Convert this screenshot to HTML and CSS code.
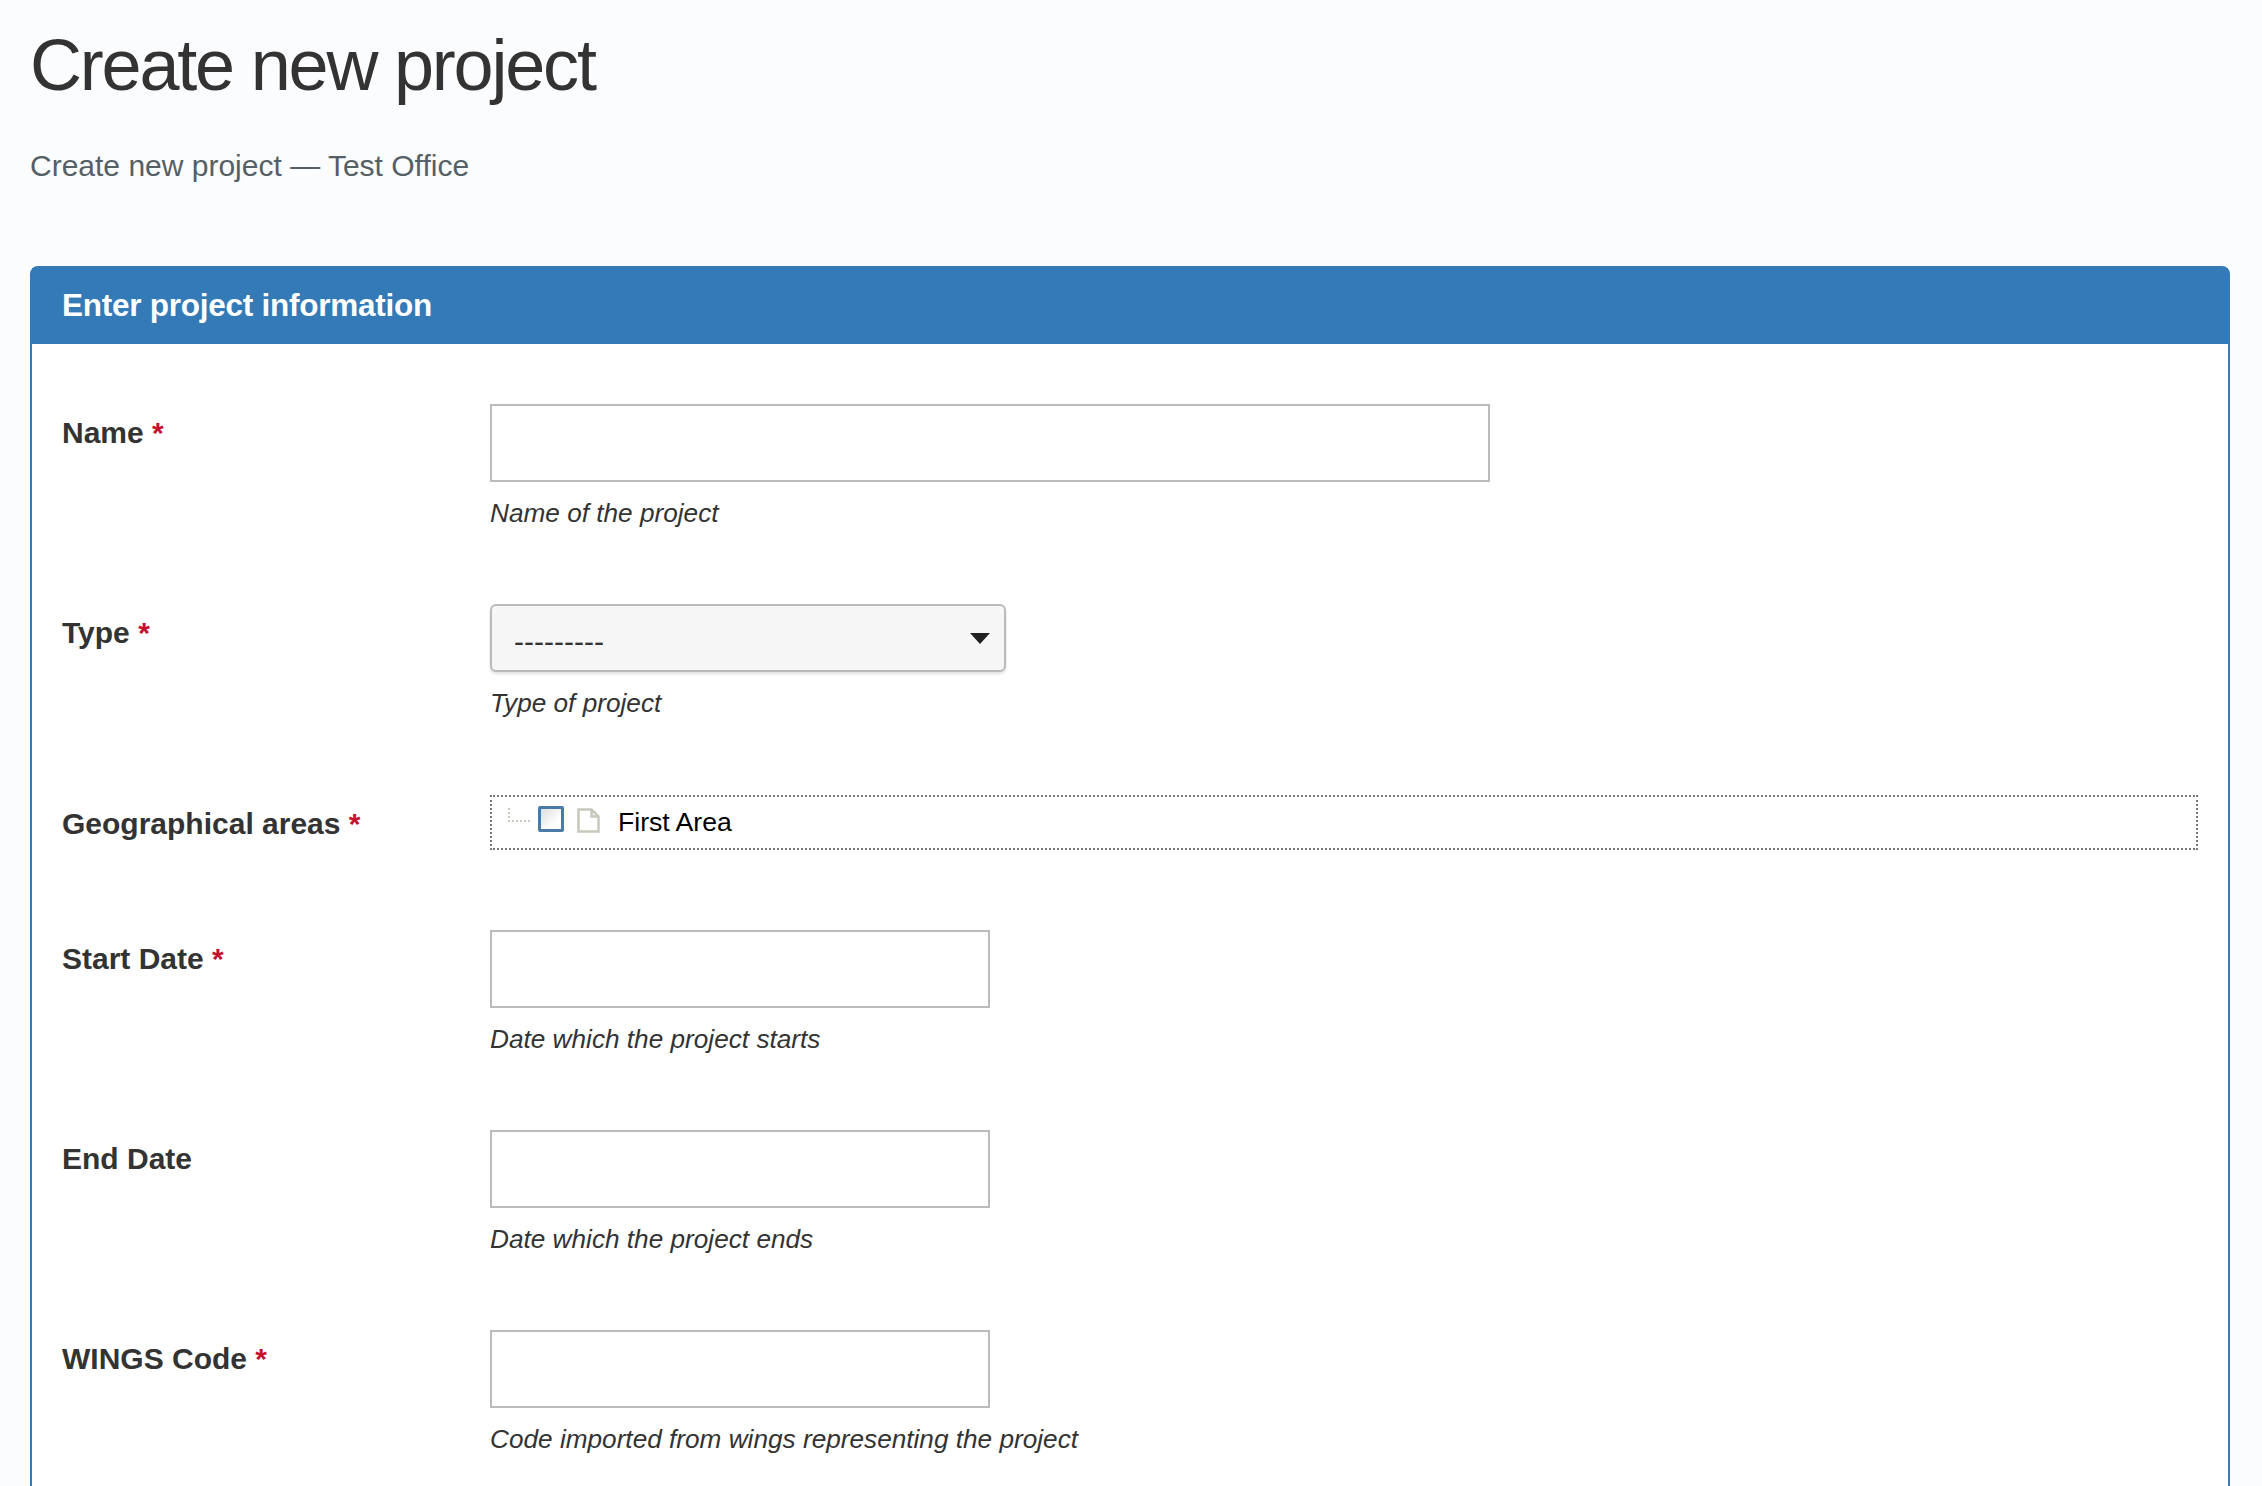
FILE: index.html

```html
<!DOCTYPE html>
<html lang="en">
<head>
  <meta charset="UTF-8" />
  <title>Create new project</title>
  <link rel="stylesheet" href="styles.css">
</head>
<body>
  <h1>Create new project</h1>
  <p class="subtitle">Create new project — Test Office</p>

  <form class="panel">
    <div class="panel-heading">Enter project information</div>
    <div class="panel-body">

      <div class="row">
        <label class="field-label">Name <span class="req">*</span></label>
        <div class="field">
          <input type="text" class="input-name">
          <p class="help">Name of the project</p>
        </div>
      </div>

      <div class="row row-type">
        <label class="field-label">Type <span class="req">*</span></label>
        <div class="field">
          <div class="select-wrap">
            <select><option>---------</option></select>
          </div>
          <p class="help">Type of project</p>
        </div>
      </div>

      <div class="row row-tree">
        <label class="field-label">Geographical areas <span class="req">*</span></label>
        <div class="field">
          <div class="tree">
            <svg class="tree-line" width="22" height="14" viewBox="0 0 22 14">
              <path d="M1 0V13H22" fill="none" stroke="#c9cdc0" stroke-width="2" stroke-dasharray="2 2"/>
            </svg>
            <span class="tree-check"></span>
            <svg class="tree-file" width="23" height="25" viewBox="0 0 23 25">
              <path d="M1.5 1.5H14.5L21.5 8.5V23.5H1.5Z M14.5 1.5V8.5H21.5" fill="#fff" stroke="#c6c8ba" stroke-width="2.5"/>
            </svg>
            <span class="tree-text">First Area</span>
          </div>
        </div>
      </div>

      <div class="row row-date">
        <label class="field-label">Start Date <span class="req">*</span></label>
        <div class="field">
          <input type="text" class="input-short">
          <p class="help">Date which the project starts</p>
        </div>
      </div>

      <div class="row row-date">
        <label class="field-label">End Date</label>
        <div class="field">
          <input type="text" class="input-short">
          <p class="help">Date which the project ends</p>
        </div>
      </div>

      <div class="row">
        <label class="field-label">WINGS Code <span class="req">*</span></label>
        <div class="field">
          <input type="text" class="input-short">
          <p class="help">Code imported from wings representing the project</p>
        </div>
      </div>

    </div>
  </form>
</body>
</html>
```

FILE: styles.css

```css
html, body {
  height: 1486px;
  overflow: hidden;
}
body {
  margin: 0;
  padding: 0 32px 0 30px;
  box-sizing: border-box;
  background-color: #fbfcfe;
  font-family: "Liberation Sans", Arial, sans-serif;
  color: #333;
}
h1 {
  margin: 0;
  padding-top: 26px;
  font-size: 72px;
  line-height: 78px;
  font-weight: normal;
  letter-spacing: -2.2px;
  color: #333;
}
.subtitle {
  margin: 42px 0 0;
  font-size: 30px;
  line-height: 40px;
  color: #555f66;
}
.panel {
  display: block;
  margin-top: 80px;
  background-color: #fff;
  border: 2px solid #337ab7;
  border-radius: 8px 8px 0 0;
}
.panel-heading {
  height: 76px;
  line-height: 74px;
  padding-left: 30px;
  background-color: #337ab7;
  color: #fff;
  font-size: 31.5px;
  letter-spacing: -0.25px;
  font-weight: bold;
}
.panel-body {
  padding: 60px 30px 0;
}
.row {
  display: flex;
  margin-bottom: 72px;
}
.row-type {
  margin-bottom: 73px;
}
.row-tree {
  margin-bottom: 80px;
}
.row-date {
  margin-bottom: 72px;
}
.field-label {
  width: 428px;
  flex-shrink: 0;
  padding-top: 9px;
  font-size: 30px;
  line-height: 40px;
  font-weight: bold;
}
.req {
  color: #c7102e;
}
.field {
  flex: 1;
}
input {
  display: block;
  box-sizing: border-box;
  height: 78px;
  border: 2px solid #bbb;
  background-color: #fff;
  padding: 0 14px;
  font-size: 30px;
}
.input-name {
  width: 1000px;
}
.input-short {
  width: 500px;
}
.help {
  margin: 13px 0 0;
  font-size: 26.2px;
  line-height: 37px;
  font-style: italic;
  color: #333;
}
.select-wrap {
  position: relative;
  width: 516px;
  height: 68px;
}
.select-wrap::after {
  content: "";
  position: absolute;
  right: 16px;
  top: 29px;
  border-left: 10px solid transparent;
  border-right: 10px solid transparent;
  border-top: 11px solid #222;
}
select {
  display: block;
  box-sizing: border-box;
  width: 100%;
  height: 100%;
  appearance: none;
  border: 2px solid #bbb;
  border-radius: 6px;
  background-color: #f6f6f6;
  box-shadow: 0 2px 3px rgba(0, 0, 0, 0.12);
  padding: 6px 22px 0;
  font-family: inherit;
  font-size: 30px;
  color: #333;
}
.tree {
  display: flex;
  align-items: flex-start;
  box-sizing: border-box;
  height: 55px;
  border: 2px dotted #777;
  padding: 9px 0 0 16px;
}
.tree-line {
  margin-top: 2px;
}
.tree-check {
  box-sizing: border-box;
  width: 26px;
  height: 26px;
  margin-left: 8px;
  border: 3px solid #4a7ba7;
  border-radius: 2px;
  background: linear-gradient(135deg, #dedede, #fff 70%);
}
.tree-file {
  margin-left: 13px;
  margin-top: 2px;
}
.tree-text {
  margin-left: 18px;
  font-size: 26.6px;
  line-height: 33px;
  color: #000;
}
```
